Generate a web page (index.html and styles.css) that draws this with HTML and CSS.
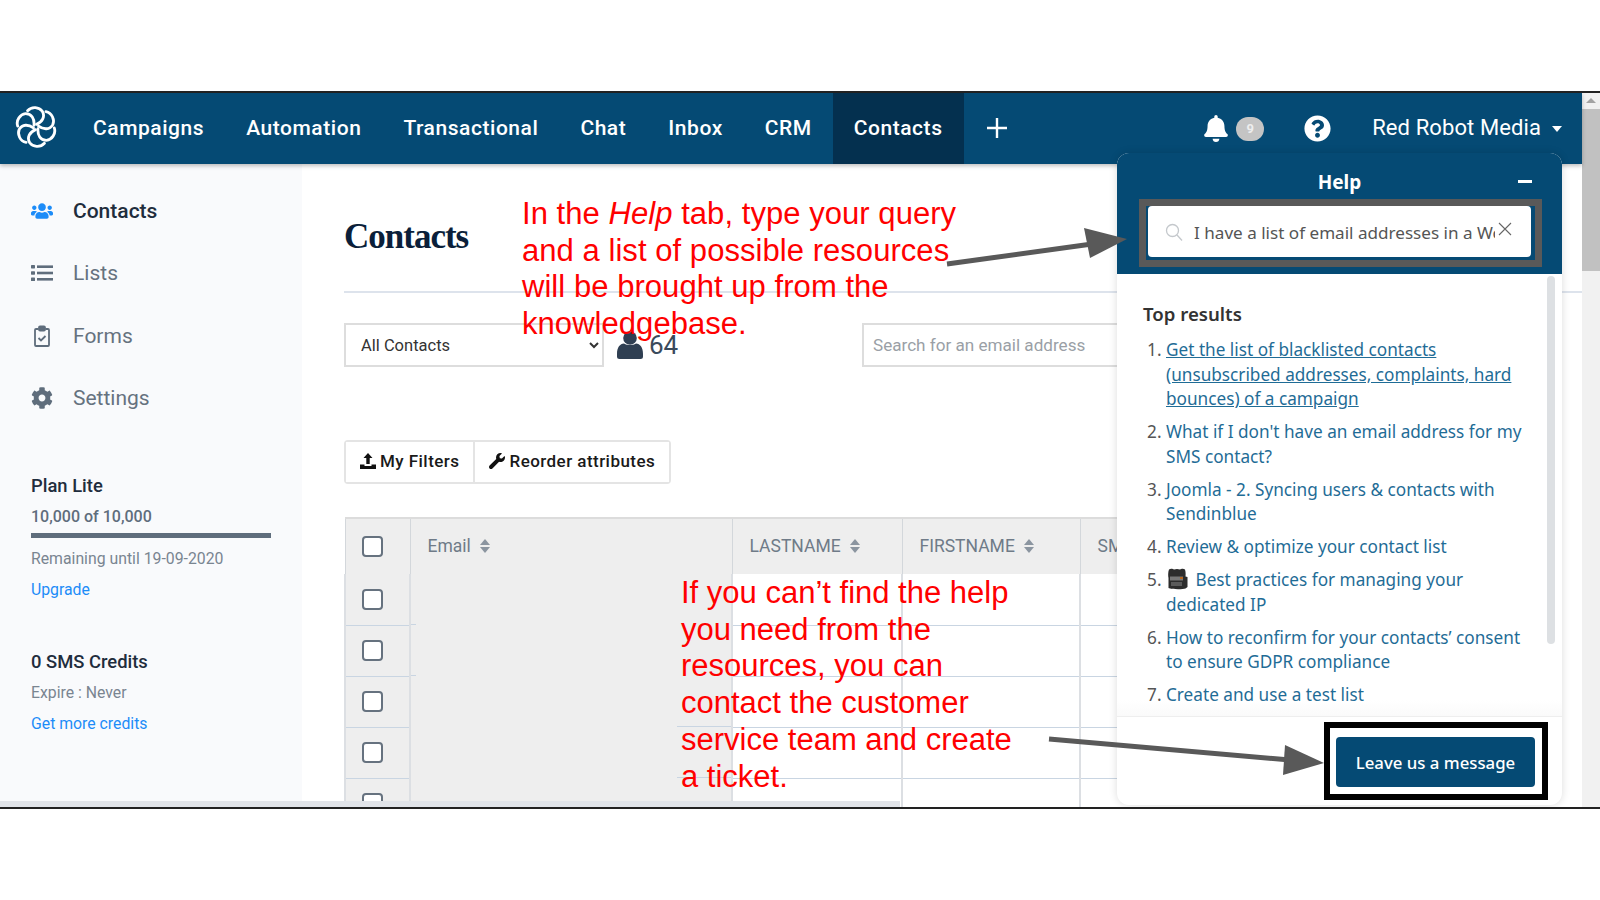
FILE: index.html
```html
<!DOCTYPE html>
<html lang="en">
<head>
    <meta charset="UTF-8">
    <title>Contacts - Help</title>
    <link rel="stylesheet" href="styles.css">
</head>
<body>

<div class="frame">
    <div class="app">
        <header class="topbar">
            <svg class="logo" viewBox="-20 -20 40 40">
                <g fill="none" stroke="#fff" stroke-width="2.700" stroke-linecap="round">
                    <path d="M0.500 -2.500C6 -5 9 -10 6 -15C3 -19 -4 -20 -8 -15.500"/>
                    <path transform="rotate(60)" d="M0.500 -2.500C6 -5 9 -10 6 -15C3 -19 -4 -20 -8 -15.500"/>
                    <path transform="rotate(120)" d="M0.500 -2.500C6 -5 9 -10 6 -15C3 -19 -4 -20 -8 -15.500"/>
                    <path transform="rotate(180)" d="M0.500 -2.500C6 -5 9 -10 6 -15C3 -19 -4 -20 -8 -15.500"/>
                    <path transform="rotate(240)" d="M0.500 -2.500C6 -5 9 -10 6 -15C3 -19 -4 -20 -8 -15.500"/>
                    <path transform="rotate(300)" d="M0.500 -2.500C6 -5 9 -10 6 -15C3 -19 -4 -20 -8 -15.500"/>
                </g>
            </svg>
            <nav class="main-nav">
                <a href="#">Campaigns</a>
                <a href="#">Automation</a>
                <a href="#">Transactional</a>
                <a href="#">Chat</a>
                <a href="#">Inbox</a>
                <a href="#">CRM</a>
                <a href="#" class="active">Contacts</a>
                <a href="#" class="plus-link">
                    <svg viewBox="0 0 22 22" width="22" height="22"><path d="M11 1v20M1 11h20" stroke="#fff" stroke-width="2.400"/></svg>
                </a>
            </nav>
            <div class="top-right">
                <svg class="bell" viewBox="0 0 448 512" fill="#fff"><path d="M224 512c35.32 0 63.97-28.65 63.97-64H160.03c0 35.35 28.65 64 63.97 64zm215.39-149.71c-19.32-20.76-55.47-51.99-55.47-154.29 0-77.7-54.48-139.9-127.94-155.16V32c0-17.67-14.32-32-31.98-32s-31.98 14.33-31.98 32v20.84C118.56 68.1 64.08 130.3 64.08 208c0 102.3-36.15 133.53-55.47 154.29-6 6.45-8.66 14.16-8.61 21.71.11 16.4 12.98 32 32.1 32h383.8c19.12 0 32-15.6 32.1-32 .05-7.55-2.61-15.27-8.61-21.71z"/></svg>
                <span class="badge">9</span>
                <svg class="help-icon" viewBox="0 0 512 512" fill="#fff"><path d="M504 256c0 136.997-111.043 248-248 248S8 392.997 8 256C8 119.083 119.043 8 256 8s248 111.083 248 248zM262.655 90c-54.497 0-89.255 22.957-116.549 63.758-3.536 5.286-2.353 12.415 2.715 16.258l34.699 26.31c5.205 3.947 12.621 3.008 16.665-2.122 17.864-22.658 30.113-35.797 57.303-35.797 20.429 0 45.698 13.148 45.698 32.958 0 14.976-12.363 22.667-32.534 33.976C247.128 238.528 216 254.941 216 296v4c0 6.627 5.373 12 12 12h56c6.627 0 12-5.373 12-12v-1.333c0-28.462 83.186-29.647 83.186-106.667 0-58.002-60.165-102-116.531-102zM256 338c-25.365 0-46 20.635-46 46 0 25.364 20.635 46 46 46s46-20.636 46-46c0-25.365-20.635-46-46-46z"/></svg>
                <span class="account">Red Robot Media</span>
                <span class="caret"></span>
            </div>
        </header>

        <div class="layout">
            <aside class="sidebar">
                <ul class="side-menu">
                    <li class="current">
                        <svg viewBox="0 0 640 512" fill="#1d8cf8"><path d="M96 224c35.3 0 64-28.7 64-64s-28.7-64-64-64-64 28.7-64 64 28.7 64 64 64zm448 0c35.3 0 64-28.7 64-64s-28.7-64-64-64-64 28.7-64 64 28.7 64 64 64zm32 32h-64c-17.6 0-33.5 7.1-45.1 18.6 40.3 22.1 68.9 62 75.1 109.4h66c17.7 0 32-14.3 32-32v-32c0-35.3-28.7-64-64-64zm-256 0c61.9 0 112-50.1 112-112S381.9 32 320 32 208 82.1 208 144s50.1 112 112 112zm76.8 32h-8.3c-20.8 10-43.9 16-68.5 16s-47.6-6-68.5-16h-8.3C179.6 288 128 339.6 128 403.2V432c0 26.5 21.5 48 48 48h288c26.5 0 48-21.5 48-48v-28.8c0-63.6-51.6-115.2-115.2-115.2zm-223.7-13.4C161.5 263.1 145.6 256 128 256H64c-35.3 0-64 28.7-64 64v32c0 17.7 14.3 32 32 32h65.9c6.3-47.4 34.9-87.3 75.2-109.4z"/></svg>
                        Contacts
                    </li>
                    <li>
                        <svg viewBox="0 0 22 18" fill="#5f6d7c"><rect x="0" y="1" width="4" height="3.400" rx=".6"/><rect x="6" y="1.400" width="16" height="2.600"/><rect x="0" y="7.300" width="4" height="3.400" rx=".6"/><rect x="6" y="7.700" width="16" height="2.600"/><rect x="0" y="13.600" width="4" height="3.400" rx=".6"/><rect x="6" y="14" width="16" height="2.600"/></svg>
                        Lists
                    </li>
                    <li>
                        <svg viewBox="0 0 22 22" fill="none" stroke="#5f6d7c" stroke-width="1.800"><path d="M7.500 4H5a1 1 0 0 0-1 1v15a1 1 0 0 0 1 1h12a1 1 0 0 0 1-1V5a1 1 0 0 0-1-1h-2.500"/><rect x="8" y="1.500" width="6" height="4" rx="1" fill="#5f6d7c"/><path d="M7.500 13l2.500 2.500 4.500-4.500"/></svg>
                        Forms
                    </li>
                    <li>
                        <svg viewBox="0 0 512 512" fill="#5f6d7c"><path d="M487.4 315.7l-42.6-24.6c4.3-23.2 4.3-47 0-70.2l42.6-24.6c4.9-2.8 7.1-8.6 5.5-14-11.1-35.6-30-67.8-54.7-94.6-3.8-4.1-10-5.1-14.8-2.3L380.8 110c-17.9-15.4-38.5-27.3-60.8-35.1V25.800c0-5.6-3.9-10.5-9.4-11.700-36.7-8.2-74.3-7.8-109.2 0-5.5 1.2-9.4 6.100-9.4 11.700V75c-22.2 7.900-42.800 19.800-60.800 35.100L88.700 85.500c-4.900-2.800-11-1.900-14.800 2.300-24.700 26.700-43.600 58.900-54.700 94.600-1.700 5.400.6 11.200 5.500 14L67.300 221c-4.300 23.200-4.300 47 0 70.200l-42.600 24.600c-4.900 2.800-7.100 8.600-5.500 14 11.100 35.600 30 67.800 54.700 94.600 3.800 4.100 10 5.100 14.800 2.300l42.600-24.600c17.900 15.400 38.500 27.300 60.800 35.100v49.200c0 5.600 3.900 10.500 9.400 11.700 36.700 8.200 74.300 7.800 109.200 0 5.500-1.200 9.400-6.100 9.400-11.700v-49.200c22.200-7.900 42.800-19.800 60.800-35.100l42.600 24.600c4.900 2.800 11 1.900 14.800-2.300 24.700-26.700 43.600-58.900 54.700-94.600 1.500-5.500-.7-11.300-5.600-14.100zM256 336c-44.100 0-80-35.900-80-80s35.900-80 80-80 80 35.900 80 80-35.900 80-80 80z"/></svg>
                        Settings
                    </li>
                </ul>

                <div class="plan plan-lite">
                    <div class="plan-name">Plan Lite</div>
                    <div class="plan-usage">10,000 of 10,000</div>
                    <div class="plan-bar"></div>
                    <div class="plan-note">Remaining until 19-09-2020</div>
                    <a href="#" class="plan-link">Upgrade</a>
                </div>

                <div class="plan plan-sms">
                    <div class="plan-name">0 SMS Credits</div>
                    <div class="plan-note">Expire : Never</div>
                    <a href="#" class="plan-link">Get more credits</a>
                </div>
            </aside>

            <main class="content">
                <h1>Contacts</h1>

                <div class="filter-row">
                    <select class="list-select">
                        <option>All Contacts</option>
                    </select>
                    <div class="count">
                        <svg viewBox="0 0 26 28" width="26" height="28" fill="#2f3f52"><circle cx="13" cy="7" r="6.800"/><path d="M0 23c0-7 3-10 7-10.500 3.500 2 8.500 2 12 0 4 .5 7 3.500 7 10.500v2.500a2.500 2.500 0 0 1-2.500 2.500h-21A2.500 2.500 0 0 1 0 25.500z"/></svg>
                        <span>64</span>
                    </div>
                    <input class="email-search" type="text" placeholder="Search for an email address">
                </div>

                <div class="btn-group">
                    <button type="button">
                        <svg viewBox="0 0 16 16" width="16" height="16" fill="#111"><path d="M8 0l4.500 5H9.700v6H6.300V5H3.500z"/><path d="M0 11.500h4.500v1.500h7v-1.500H16V16H0z"/></svg>
                        My Filters
                    </button>
                    <button type="button">
                        <svg viewBox="0 0 512 512" width="16" height="16" fill="#111"><path d="M507.73 109.1c-2.24-9.03-13.54-12.09-20.12-5.51l-74.36 74.36-67.88-11.31-11.31-67.88 74.36-74.36c6.62-6.62 3.43-17.9-5.66-20.16-47.38-11.74-99.55.91-136.58 37.93-39.64 39.64-50.55 97.1-34.05 147.2L18.74 402.76c-24.99 24.99-24.99 65.51 0 90.5 24.99 24.99 65.51 24.99 90.5 0l213.21-213.21c50.12 16.71 107.47 5.68 147.37-34.22 37.07-37.07 49.7-89.32 37.91-136.73z"/></svg>
                        Reorder attributes
                    </button>
                </div>

                <table class="contacts-table">
                    <thead>
                        <tr>
                            <th class="check-col"><span class="checkbox"></span></th>
                            <th class="email-col">Email <span class="sort"></span></th>
                            <th class="last-col">LASTNAME <span class="sort"></span></th>
                            <th class="first-col">FIRSTNAME <span class="sort"></span></th>
                            <th>SMS</th>
                        </tr>
                    </thead>
                    <tbody>
                        <tr><td class="check-col"><span class="checkbox"></span></td><td class="email-col"></td><td></td><td></td><td></td></tr>
                        <tr><td class="check-col"><span class="checkbox"></span></td><td class="email-col"></td><td></td><td></td><td></td></tr>
                        <tr class="lined"><td class="check-col"><span class="checkbox"></span></td><td class="email-col"></td><td></td><td></td><td></td></tr>
                        <tr class="lined"><td class="check-col"><span class="checkbox"></span></td><td class="email-col"></td><td></td><td></td><td></td></tr>
                        <tr><td class="check-col"><span class="checkbox"></span></td><td class="email-col"></td><td></td><td></td><td></td></tr>
                    </tbody>
                </table>
            </main>
        </div>
    </div>

    <div class="page-scrollbar">
        <span class="scroll-up"></span>
        <span class="scroll-thumb"></span>
    </div>

    <div class="bottom-scroll"></div>

    <div class="help-widget">
        <div class="help-head">
            <div class="help-title">Help</div>
            <span class="help-min"></span>
            <div class="search-mark">
                <div class="help-search">
                    <svg viewBox="0 0 18 18" width="18" height="18" fill="none" stroke="#c4c8cc" stroke-width="1.300"><circle cx="7.500" cy="7.500" r="6"/><path d="M12 12l5 5.500"/></svg>
                    <input type="text" value="I have a list of email addresses in a Word document">
                    <svg class="clear" viewBox="0 0 14 14" width="14" height="14" fill="none" stroke="#666" stroke-width="1.100"><path d="M1 1l12 12M13 1L1 13"/></svg>
                </div>
            </div>
        </div>

        <div class="help-body">
            <h3>Top results</h3>
            <ol>
                <li><a href="#" class="open">Get the list of blacklisted contacts (unsubscribed addresses, complaints, hard bounces) of a campaign</a></li>
                <li><a href="#">What if I don't have an email address for my SMS contact?</a></li>
                <li><a href="#">Joomla - 2. Syncing users &amp; contacts with Sendinblue</a></li>
                <li><a href="#">Review &amp; optimize your contact list</a></li>
                <li><a href="#"><svg class="emoji" viewBox="0 0 22 22"><path d="M3 1.500C5 0 7 1 8 1.500c2-.8 4-.8 6 0 1-.5 3-1.500 5 0 1 3 .5 6 .5 7l2 .5v10l-2 1.500C17 21.500 5 21.500 2.500 20V10C2 8 2 4 3 1.500z" fill="#2c2c2c"/><rect x="4" y="8.500" width="13" height="4" fill="#777"/><rect x="5" y="14" width="11" height="4" fill="#5a5a5a"/><rect x="14" y="9" width="3" height="2" fill="#b5651d"/></svg> Best practices for managing your dedicated IP</a></li>
                <li><a href="#">How to reconfirm for your contacts’ consent to ensure GDPR compliance</a></li>
                <li><a href="#">Create and use a test list</a></li>
            </ol>
            <span class="help-scroll"></span>
        </div>

        <div class="help-foot">
            <div class="message-mark">
                <button type="button" class="message-btn">Leave us a message</button>
            </div>
        </div>
    </div>

    <p class="note note-top">In the <em>Help</em> tab, type your query<br>and a list of possible resources<br>will be brought up from the<br>knowledgebase.</p>
    <p class="note note-bottom">If you can’t find the help<br>you need from the<br>resources, you can<br>contact the customer<br>service team and create<br>a ticket.</p>

    <svg class="arrows" viewBox="0 93 1600 714" fill="#595959">
        <path d="M947 264L1092 244" stroke="#595959" stroke-width="5"/>
        <polygon points="1127,239 1084,228 1090,258"/>
        <path d="M1049 739L1290 760" stroke="#595959" stroke-width="5"/>
        <polygon points="1324,763 1285,745 1283,775"/>
    </svg>
</div>

</body>
</html>
```

FILE: styles.css
```css
* {
    box-sizing: border-box;
    margin: 0;
    padding: 0;
}

body {
    background-color: #fff;
    font-family: 'Roboto', sans-serif;
    overflow: hidden;
}

.frame {
    position: relative;
    display: flex;
    margin-top: 91px;
    height: 718px;
    border-top: 2px solid #222;
    border-bottom: 2px solid #222;
    overflow: hidden;
}

.app {
    flex: 1;
    min-width: 0;
    display: flex;
    flex-direction: column;
}

/* top bar */
.topbar {
    display: flex;
    align-items: center;
    height: 71px;
    flex-shrink: 0;
    background-color: #054a74;
    box-shadow: 0 2px 4px rgba(0, 0, 0, 0.25);
    position: relative;
    z-index: 1;
}

.logo {
    width: 42px;
    height: 42px;
    margin-left: 15px;
    margin-right: -4px;
    margin-top: -3px;
}

.main-nav {
    display: flex;
    height: 100%;
    margin-left: 19px;
}

.main-nav a {
    display: flex;
    align-items: center;
    padding: 0 21px 2px;
    color: #fff;
    font-size: 21px;
    font-weight: 500;
    letter-spacing: 0.55px;
    text-decoration: none;
}

.main-nav a.active {
    background-color: #04304f;
}

.main-nav a.plus-link {
    padding: 0 22px 2px;
}

.top-right {
    display: flex;
    align-items: center;
    margin-left: auto;
    padding-right: 20px;
    color: #fff;
}

.bell {
    width: 24px;
    height: 27px;
}

.badge {
    width: 28px;
    height: 24px;
    margin-left: 8px;
    border-radius: 12px;
    background-color: #c4c4c4;
    color: #eee;
    font-size: 13px;
    font-weight: 700;
    line-height: 24px;
    text-align: center;
}

.help-icon {
    width: 27px;
    height: 27px;
    margin-left: 40px;
}

.account {
    margin-left: 41px;
    padding-bottom: 2px;
    font-size: 22px;
    letter-spacing: 0.1px;
}

.caret {
    margin-left: 11px;
    border-top: 6px solid #fff;
    border-left: 5.500px solid transparent;
    border-right: 5.500px solid transparent;
}

/* sidebar */
.layout {
    flex: 1;
    display: flex;
    min-height: 0;
}

.sidebar {
    width: 302px;
    flex-shrink: 0;
    padding-top: 16px;
    background-color: #f9fafc;
}

.side-menu {
    list-style: none;
}

.side-menu li {
    display: flex;
    align-items: center;
    height: 62.300px;
    padding-left: 31px;
    color: #66727f;
    font-size: 21px;
}

.side-menu li svg {
    width: 22px;
    height: 22px;
    margin-right: 20px;
}

.side-menu li.current {
    color: #1f2d3d;
    font-weight: 500;
}

.plan {
    padding-left: 31px;
    width: 271px;
}

.plan-lite {
    margin-top: 42px;
}

.plan-sms {
    margin-top: 42px;
}

.plan-name {
    height: 31px;
    line-height: 30px;
    color: #1f2d3d;
    font-size: 18.400px;
    font-weight: 500;
}

.plan-sms .plan-name {
    height: 30px;
}

.plan-usage {
    height: 30px;
    line-height: 30px;
    color: #5f6d7c;
    font-size: 16px;
    font-weight: 500;
}

.plan-bar {
    height: 5px;
    margin-top: 1px;
    margin-bottom: 5px;
    background-color: #5f6d7c;
}

.plan-note {
    height: 31px;
    line-height: 31px;
    color: #7a8591;
    font-size: 15.800px;
}

.plan-link {
    display: block;
    height: 31px;
    line-height: 31px;
    color: #1d8cf8;
    font-size: 15.800px;
    text-decoration: none;
}

/* main content */
.content {
    flex: 1;
    min-width: 0;
    padding: 0 0 0 42px;
    background-color: #fff;
    overflow: hidden;
}

h1 {
    height: 129px;
    padding-top: 50px;
    border-bottom: 2px solid #dde3ec;
    color: #0b1f3a;
    font-family: 'Liberation Serif', serif;
    font-size: 35px;
    font-weight: 700;
    letter-spacing: -1px;
    line-height: 46px;
}

.filter-row {
    display: flex;
    align-items: center;
    margin-top: 30px;
}

.list-select {
    width: 260px;
    height: 44px;
    padding-left: 11px;
    border: 2px solid #ddd;
    background-color: #fff;
    color: #333;
    font-family: 'Roboto', sans-serif;
    font-size: 16.500px;
}

.count {
    display: flex;
    align-items: center;
    gap: 6px;
    width: 245px;
    margin-left: 13px;
    color: #3a4a5c;
    font-size: 26px;
}

.email-search {
    width: 400px;
    height: 44px;
    padding-left: 9px;
    border: 2px solid #ddd;
    font-family: 'Roboto', sans-serif;
    font-size: 17.100px;
}

.email-search::placeholder {
    color: #9a9fa6;
}

.btn-group {
    display: inline-flex;
    margin-top: 73px;
    border: 2px solid #e4e4e4;
    border-radius: 4px;
    vertical-align: top;
}

.btn-group button {
    display: flex;
    align-items: center;
    gap: 4px;
    height: 40px;
    padding: 0 14px 3px;
    border: none;
    background-color: #fff;
    color: #1a1a1a;
    font-family: 'Roboto', sans-serif;
    font-size: 17px;
    font-weight: 500;
    letter-spacing: 0.45px;
}

.btn-group button + button {
    border-left: 2px solid #e4e4e4;
}

.contacts-table {
    display: table;
    table-layout: fixed;
    width: 1200px;
    margin-top: 33px;
    border-collapse: collapse;
}

.contacts-table th {
    height: 56px;
    padding: 0 0 1px 17px;
    border-top: 2px solid #dcdcdc;
    border-left: 1px solid #d3d7db;
    background-color: #eee;
    color: #6f7b88;
    font-size: 17.500px;
    font-weight: 400;
    text-align: left;
}

.contacts-table td {
    height: 51px;
    border-left: 2px solid #dcdfe3;
    border-bottom: 1px solid #c9d5e2;
}

.contacts-table .check-col {
    width: 65px;
    padding: 0 0 0 16px;
    background-color: #eee;
    text-align: left;
}

.contacts-table .email-col {
    width: 322px;
}

.contacts-table td.email-col {
    border-bottom: none;
    background-color: #eee;
    background-image: linear-gradient(#c9d5e2, #c9d5e2);
    background-position: left bottom;
    background-repeat: no-repeat;
    background-size: 5px 1px;
}

.contacts-table tr.lined td.email-col {
    background-position: right bottom;
    background-size: 54px 1px;
}

.contacts-table .last-col {
    width: 170px;
}

.contacts-table .first-col {
    width: 178px;
}

.checkbox {
    display: inline-block;
    width: 21px;
    height: 21px;
    border: 2px solid #66727f;
    border-radius: 4px;
    background-color: #fff;
    vertical-align: middle;
}

.sort {
    display: inline-block;
    position: relative;
    width: 10px;
    height: 14px;
    margin-left: 5px;
    vertical-align: -1px;
}

.sort::before, .sort::after {
    content: "";
    position: absolute;
    left: 0;
    border-left: 5px solid transparent;
    border-right: 5px solid transparent;
}

.sort::before {
    top: 0;
    border-bottom: 6px solid #8b95a0;
}

.sort::after {
    bottom: 0;
    border-top: 6px solid #8b95a0;
}

.bottom-scroll {
    position: absolute;
    left: 0;
    bottom: 0;
    width: 900px;
    height: 6px;
    background-color: #e1e4e9;
}

.page-scrollbar {
    position: relative;
    width: 18px;
    flex-shrink: 0;
    background-color: #f1f1f1;
}

.scroll-up {
    position: absolute;
    top: 5px;
    left: 4px;
    border-bottom: 5px solid #a3a3a3;
    border-left: 5px solid transparent;
    border-right: 5px solid transparent;
}

.scroll-thumb {
    position: absolute;
    top: 16px;
    left: 0;
    width: 100%;
    height: 162px;
    background-color: #c1c1c1;
}

/* help widget */
.help-widget {
    position: absolute;
    top: 60px;
    left: 1117px;
    width: 445px;
    height: 652px;
    display: flex;
    flex-direction: column;
    border-radius: 12px;
    background-color: #fff;
    box-shadow: 0 0 8px rgba(0, 0, 0, 0.14);
    font-family: 'Noto Sans', sans-serif;
    overflow: hidden;
    z-index: 2;
}

.help-head {
    position: relative;
    height: 121px;
    flex-shrink: 0;
    background-color: #054a74;
}

.help-title {
    height: 46px;
    padding-top: 12px;
    color: #fff;
    font-size: 19px;
    font-weight: 700;
    line-height: 34px;
    text-align: center;
}

.help-min {
    position: absolute;
    top: 27px;
    right: 30px;
    width: 14px;
    height: 3px;
    background-color: #fff;
}

.search-mark {
    height: 68px;
    margin: 0 20px 0 22px;
    padding: 0 4px 3px 2px;
    border: 7px solid #595959;
}

.help-search {
    display: flex;
    align-items: center;
    height: 51px;
    padding-left: 17px;
    border-radius: 4px;
    background-color: #fff;
}

.help-search input {
    width: 301px;
    margin-left: 11px;
    padding-top: 2px;
    border: none;
    outline: none;
    color: #555;
    font-family: 'Noto Sans', sans-serif;
    font-size: 17.100px;
}

.help-search .clear {
    margin-left: 3px;
    margin-top: -6px;
}

.help-body {
    position: relative;
    flex: 1;
    min-height: 0;
    padding: 27px 30px 0 26px;
    overflow: hidden;
}

.help-body::after {
    content: "";
    position: absolute;
    left: 0;
    right: 0;
    bottom: 0;
    height: 16px;
    background: linear-gradient(rgba(255, 255, 255, 0), #fafafa);
}

.help-body h3 {
    margin-bottom: 11px;
    color: #333;
    font-size: 18.600px;
    font-weight: 600;
    line-height: 26px;
}

.help-body ol {
    padding-left: 23px;
    color: #555;
    font-size: 17.200px;
    line-height: 24.500px;
}

.help-body li {
    margin-bottom: 8.500px;
}

.help-body a {
    color: #1f6c96;
    text-decoration: none;
}

.help-body a.open {
    text-decoration: underline;
}

.emoji {
    width: 22px;
    height: 22px;
    margin-right: 3px;
    vertical-align: -4px;
}

.help-scroll {
    position: absolute;
    top: 2px;
    right: 7px;
    width: 8px;
    height: 368px;
    border-radius: 4px;
    background-color: #dde0e3;
}

.help-foot {
    display: flex;
    justify-content: flex-end;
    height: 89px;
    flex-shrink: 0;
    padding: 5px 14px 0 0;
    border-top: 1px solid #eee;
}

.message-mark {
    width: 224px;
    height: 78px;
    padding: 9px 7px 0 6px;
    border: 6px solid #000;
}

.message-btn {
    width: 199px;
    height: 50px;
    border: none;
    border-radius: 4px;
    background-color: #054a74;
    color: #fff;
    font-family: 'Noto Sans', sans-serif;
    font-size: 16.800px;
    font-weight: 500;
}

/* annotations over the picture */
.note {
    position: absolute;
    color: #f00;
    font-family: 'Liberation Sans', sans-serif;
    font-size: 31px;
    line-height: 36.700px;
    white-space: nowrap;
    z-index: 3;
}

.note-top {
    top: 103px;
    left: 522px;
    letter-spacing: 0.05px;
}

.note-bottom {
    top: 482px;
    left: 681px;
}

.arrows {
    position: absolute;
    top: 0;
    left: 0;
    width: 1600px;
    height: 714px;
    pointer-events: none;
    z-index: 3;
}
```
